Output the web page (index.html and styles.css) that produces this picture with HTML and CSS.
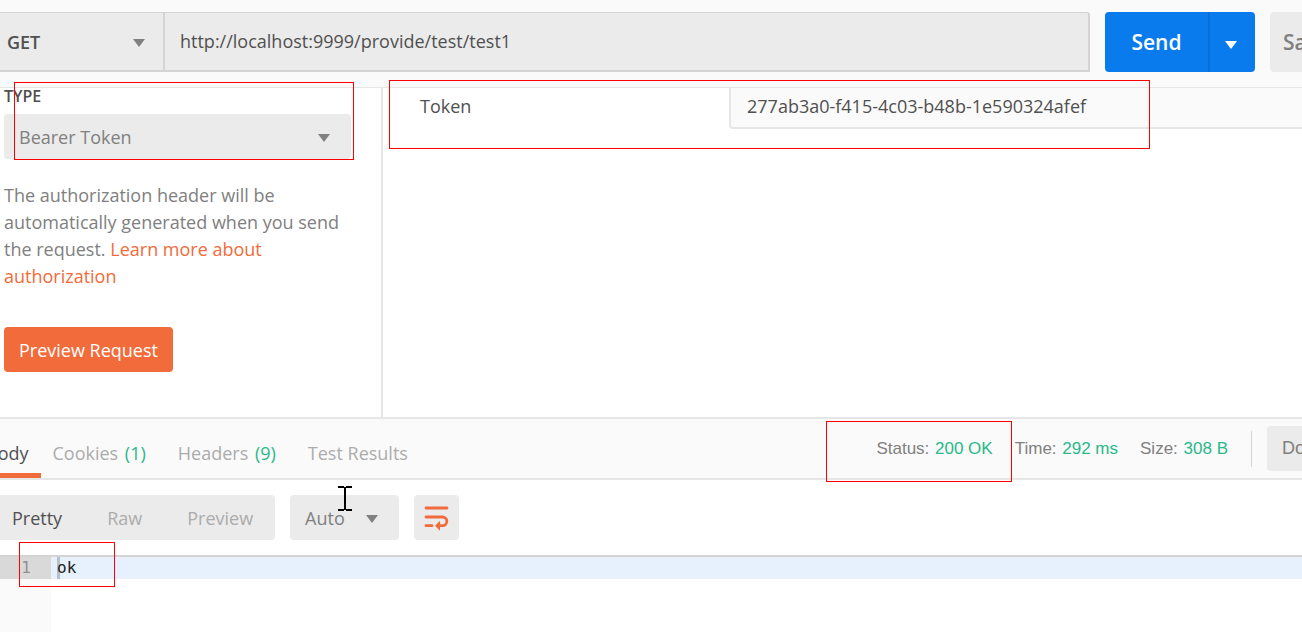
FILE: index.html
```
<!DOCTYPE html>
<html lang="en">
<head>
  <meta charset="UTF-8">
  <meta name="viewport" content="width=device-width, initial-scale=1.0">
  <title>API Request</title>
  <link rel="stylesheet" href="styles.css">
</head>
<body>
  <form class="request-bar">
    <div class="select-wrap method">
      <select aria-label="Method">
        <option>GET</option>
        <option>POST</option>
      </select>
      <svg class="caret" viewBox="0 0 12 8"><path d="M0 0h12L6 8z"/></svg>
    </div>
    <input class="url" type="text" aria-label="Request URL" value="http://localhost:9999/provide/test/test1">
    <div class="send-group">
      <button type="button" class="send">Send</button>
      <button type="button" class="send-more" aria-label="Send options">
        <svg class="caret" viewBox="0 0 12 8"><path d="M0 0h12L6 8z"/></svg>
      </button>
    </div>
    <button type="button" class="save">Save</button>
  </form>

  <main class="auth">
    <section class="auth-type">
      <label class="type-label" for="auth-type">TYPE</label>
      <div class="select-wrap type-select">
        <select id="auth-type">
          <option>Bearer Token</option>
          <option>Basic Auth</option>
        </select>
        <svg class="caret" viewBox="0 0 12 8"><path d="M0 0h12L6 8z"/></svg>
      </div>
      <p class="hint">The authorization header will be automatically generated when you send the request. <a href="#">Learn more about authorization</a></p>
      <button type="button" class="preview-btn">Preview Request</button>
    </section>
    <section class="auth-params">
      <label for="token">Token</label>
      <input id="token" type="text" value="277ab3a0-f415-4c03-b48b-1e590324afef">
    </section>
  </main>

  <section class="response">
    <div class="response-head">
      <nav class="tabs">
        <button type="button" class="tab active">Body</button>
        <button type="button" class="tab">Cookies <span class="count">(1)</span></button>
        <button type="button" class="tab">Headers <span class="count">(9)</span></button>
        <button type="button" class="tab">Test Results</button>
      </nav>
      <div class="stats">
        <span>Status: <b>200 OK</b></span>
        <span>Time: <b>292 ms</b></span>
        <span>Size: <b>308 B</b></span>
      </div>
      <button type="button" class="download">Download</button>
    </div>

    <div class="toolbar">
      <div class="views">
        <button type="button" class="active">Pretty</button>
        <button type="button">Raw</button>
        <button type="button">Preview</button>
      </div>
      <div class="select-wrap format">
        <select aria-label="Format">
          <option>Auto</option>
          <option>JSON</option>
        </select>
        <svg class="caret" viewBox="0 0 12 8"><path d="M0 0h12L6 8z"/></svg>
      </div>
      <button type="button" class="wrap-btn" aria-label="Wrap lines">
        <svg viewBox="0 0 26 26">
          <path d="M2 3H23M2 12H18.500a4.200 4.200 0 0 1 0 8.700H16M2 20.700H8" fill="none" stroke="#f26b3a" stroke-width="2.800" stroke-linecap="round"/>
          <path d="M11 20.700l5-5v10z" fill="#f26b3a"/>
        </svg>
      </button>
    </div>

    <div class="editor">
      <div class="gutter"><span>1</span></div>
      <div class="code"><div class="line">ok</div></div>
    </div>
  </section>

  <!-- marked areas -->
  <div class="mark mark-type"></div>
  <div class="mark mark-token"></div>
  <div class="mark mark-status"></div>
  <div class="mark mark-body"></div>

  <svg class="pointer" viewBox="0 0 14 25"><path d="M0 1H6M8 1H14M7 1V24M0 24H6M8 24H14" fill="none" stroke="#000" stroke-width="2"/></svg>
</body>
</html>
```
FILE: styles.css
```
* {
  margin: 0;
  padding: 0;
  box-sizing: border-box;
}

body {
  display: flex;
  flex-direction: column;
  min-height: 100vh;
  position: relative;
  overflow: hidden;
  font-family: "Open Sans", sans-serif;
  font-size: 18px;
  color: #505050;
  background-color: #fff;
}

button,
input,
select {
  font: inherit;
  color: inherit;
  border: none;
  outline: none;
  background: none;
}

button {
  cursor: pointer;
}

.caret {
  width: 12px;
  height: 8px;
  fill: #808080;
}

.select-wrap {
  display: grid;
  align-items: center;
  background-color: #ebebeb;
  border-radius: 4px;
}

.select-wrap select,
.select-wrap .caret {
  grid-area: 1 / 1;
}

.select-wrap select {
  appearance: none;
  width: 100%;
  height: 100%;
}

.select-wrap .caret {
  justify-self: end;
  margin-top: 2px;
  pointer-events: none;
}

/* Request bar */
.request-bar {
  display: flex;
  height: 88px;
  padding: 12px 0 15px;
  margin-right: -64px;
  background-color: #fafafa;
  border-bottom: 1px solid #e6e6e6;
}

.method {
  width: 165px;
  border: solid #d4d4d4;
  border-width: 1px 2px 2px 0;
  border-radius: 0;
  font-weight: 600;
}

.method select {
  padding-left: 7px;
}

.method .caret {
  margin-right: 18px;
}

.url {
  flex: 1;
  min-width: 0;
  padding: 0 15px 2px;
  background-color: #ebebeb;
  border: solid #d4d4d4;
  border-width: 1px 2px 2px 0;
  border-radius: 0 3px 0 0;
}

.send-group {
  display: flex;
  width: 150px;
  margin: 0 15px;
  border-radius: 4px;
  overflow: hidden;
  background-color: #097bed;
  color: #fff;
}

.send {
  flex: 1;
  font-size: 21px;
  font-weight: 600;
}

.send-more {
  width: 47px;
  padding-right: 4px;
  border-left: 2px solid #0a70d8;
}

.send-more .caret {
  fill: #fff;
}

.save {
  width: 96px;
  padding-left: 13px;
  background-color: #ebebeb;
  border-radius: 4px;
  color: #808080;
  font-size: 21px;
  font-weight: 600;
  text-align: left;
}

/* Authorization */
.auth {
  display: flex;
  height: 329px;
}

.auth-type {
  width: 383px;
  padding: 0 30px 0 4px;
  border-right: 2px solid #e6e6e6;
}

.type-label {
  display: block;
  height: 26px;
  line-height: 16px;
  font-size: 16px;
  font-weight: 600;
}

.type-select {
  height: 45px;
  color: #808080;
}

.type-select select {
  padding-left: 15px;
}

.type-select .caret {
  margin-right: 21px;
}

.hint {
  margin: 23px 0 37px;
  line-height: 27px;
  color: #808080;
}

.hint a {
  color: #f26b3a;
  text-decoration: none;
}

.preview-btn {
  height: 45px;
  padding: 0 15px;
  border-radius: 4px;
  background-color: #f26b3a;
  color: #fff;
  font-weight: 500;
}

.auth-params {
  flex: 1;
  display: flex;
  align-items: flex-start;
}

.auth-params label {
  width: 346px;
  padding-left: 37px;
  line-height: 37px;
}

.auth-params input {
  flex: 1;
  height: 41px;
  padding: 0 16px 4px;
  background-color: #fafafa;
  border: solid #e6e6e6;
  border-width: 0 0 2px 2px;
  border-radius: 0 0 0 4px;
}

/* Response */
.response {
  flex: 1;
  display: flex;
  flex-direction: column;
}

.response-head {
  display: flex;
  height: 63px;
  margin-right: -64px;
  background-color: #fafafa;
  border: solid #e6e6e6;
  border-width: 2px 0;
}

.tabs {
  flex: 1;
  display: flex;
  margin-left: -26px;
}

.tab {
  padding: 14px 20px 0 12px;
  border-bottom: 5px solid transparent;
  color: #acacac;
}

.tab.active {
  padding-right: 12px;
  border-color: #f26b3a;
  color: #505050;
}

.count {
  margin-left: 2px;
  color: #29b88a;
}

.stats {
  display: flex;
  gap: 22px;
  height: 36px;
  padding-right: 23px;
  margin: 12px 15px 0 0;
  border-right: 1px solid #d4d4d4;
  font-family: "Liberation Sans", sans-serif;
  font-size: 17px;
  line-height: 36px;
  color: #808080;
}

.stats b {
  margin-left: 1px;
  font-weight: 400;
  color: #29b88a;
}

.download {
  width: 99px;
  height: 45px;
  margin-top: 7px;
  padding-left: 15px;
  border-radius: 4px;
  background-color: #ebebeb;
  color: #808080;
  font-family: "Liberation Sans", sans-serif;
  text-align: left;
}

.toolbar {
  display: flex;
  gap: 15px;
  height: 75px;
  padding: 15px 0;
}

.views {
  display: flex;
  gap: 45px;
  padding: 0 22px 0 12px;
  background-color: #ebebeb;
  border-radius: 0 4px 4px 0;
}

.views button {
  color: #acacac;
}

.views .active {
  color: #505050;
}

.format {
  width: 109px;
  color: #808080;
}

.format select {
  padding-left: 15px;
}

.format .caret {
  margin-right: 21px;
}

.wrap-btn {
  width: 45px;
  border-radius: 4px;
  background-color: #ebebeb;
}

.wrap-btn svg {
  width: 26px;
  height: 26px;
  vertical-align: middle;
}

.editor {
  flex: 1;
  display: flex;
  border-top: 2px solid #d4d4d4;
  font-family: "DejaVu Sans Mono", monospace;
  font-size: 16px;
  line-height: 22px;
}

.gutter {
  width: 51px;
  background-color: #fafafa;
  color: #909090;
}

.gutter span {
  display: block;
  padding-right: 20px;
  background-color: #d9d9d9;
  text-align: right;
}

.code {
  flex: 1;
}

.line {
  padding-left: 6px;
  background: linear-gradient(#b5c0ca, #b5c0ca) 6px 0 / 3px 22px no-repeat #e6f1fd;
  color: #202020;
}

/* Red frames around the marked areas */
.mark {
  position: absolute;
  border: 1px solid #f00;
  pointer-events: none;
}

.mark-type {
  left: 14px;
  top: 82px;
  width: 340px;
  height: 78px;
}

.mark-token {
  left: 389px;
  top: 80px;
  width: 761px;
  height: 69px;
}

.mark-status {
  right: 290px;
  top: 421px;
  width: 186px;
  height: 61px;
}

.mark-body {
  left: 19px;
  top: 542px;
  width: 96px;
  height: 45px;
}

.pointer {
  position: absolute;
  left: 338px;
  top: 486px;
  width: 14px;
  height: 25px;
}
```
